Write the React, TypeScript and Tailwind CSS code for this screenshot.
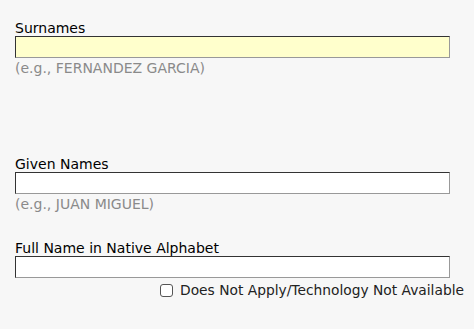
import React from 'react'

interface FieldProps {
  label: string
  hint?: string
  highlight?: boolean
}

// single text field with label above and optional example hint below
function Field({ label, hint, highlight }: FieldProps) {
  return (
    <div className="flex flex-col">
      <label className="leading-[16px] text-black">{label}</label>
      <input
        type="text"
        className={`h-[22px] w-[435px] border border-t-[#333] border-l-[#333] border-r-[#999] border-b-[#999] outline-none ${
          highlight ? 'bg-[#ffffcc]' : 'bg-white'
        }`}
      />
      {hint && <span className="mt-[2px] leading-[16px] text-[#8a8a8a]">{hint}</span>}
    </div>
  )
}

export default function App() {
  return (
    <div
      className="min-h-[329px] w-[474px] bg-[#f7f7f7] px-[15px] pt-[20px] text-[14px]"
      style={{ fontFamily: '"DejaVu Sans", Verdana, sans-serif' }}
    >
      <Field label="Surnames" hint="(e.g., FERNANDEZ GARCIA)" highlight />

      <div className="mt-[80px]">
        <Field label="Given Names" hint="(e.g., JUAN MIGUEL)" />
      </div>

      <div className="mt-[28px]">
        <Field label="Full Name in Native Alphabet" />
        <div className="-mr-[5px] mt-[3px] flex items-center justify-end gap-[7px]">
          <input
            type="checkbox"
            className="h-[13px] w-[13px] appearance-none rounded-[3px] border border-[#555] bg-white"
          />
          <span className="text-[13.8px] leading-[18px] text-[#222]">
            Does Not Apply/Technology Not Available
          </span>
        </div>
      </div>
    </div>
  )
}
